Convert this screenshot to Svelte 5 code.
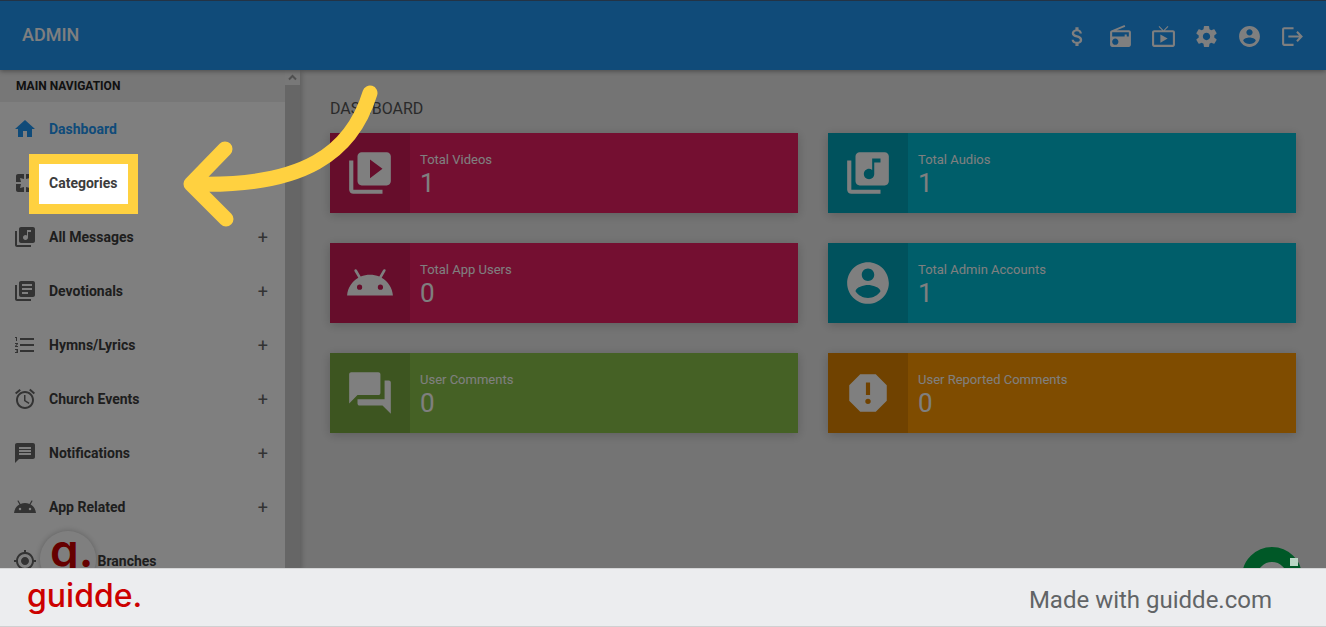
<script lang="ts">
  interface Action {
    label: string;
    icon: string;
  }

  interface MenuItem {
    label: string;
    icon: string;
    active?: boolean;
    expandable?: boolean;
  }

  interface Card {
    label: string;
    value: number;
    icon: string;
    tone: "pink" | "cyan" | "green" | "orange";
  }

  const icons: Record<string, string> = {
    home: "M10 20v-6h4v6h5v-8h3L12 3 2 12h3v8z",
    pages:
      "M3 5v6h5L7 7l4 1V3H5c-1.1 0-2 .9-2 2zm5 8H3v6c0 1.1.9 2 2 2h6v-5l-4 1 1-4zm9 4l-4-1v5h6c1.1 0 2-.9 2-2v-6h-5l1 4zm2-14h-6v5l4-1-1 4h5V5c0-1.1-.9-2-2-2z",
    music:
      "M20 2H8c-1.1 0-2 .9-2 2v12c0 1.1.9 2 2 2h12c1.1 0 2-.9 2-2V4c0-1.1-.9-2-2-2zm-2 5h-3v5.5c0 1.38-1.12 2.5-2.5 2.5S10 13.88 10 12.5s1.12-2.5 2.5-2.5c.57 0 1.08.19 1.5.51V5h4v2zM4 6H2v14c0 1.1.9 2 2 2h14v-2H4V6z",
    books:
      "M4 6H2v14c0 1.1.9 2 2 2h14v-2H4V6zm16-4H8c-1.1 0-2 .9-2 2v12c0 1.1.9 2 2 2h12c1.1 0 2-.9 2-2V4c0-1.1-.9-2-2-2zm-1 9H9V9h10v2zm-4 4H9v-2h6v2zm4-8H9V5h10v2z",
    list: "M2 17h2v.5H3v1h1v.5H2v1h3v-4H2v1zm1-9h1V4H2v1h1v3zm-1 3h1.8L2 13.1v.9h3v-1H3.2L5 10.9V10H2v1zm5-6v2h14V5H7zm0 14h14v-2H7v2zm0-6h14v-2H7v2z",
    alarm:
      "M22 5.7l-4.6-3.9-1.3 1.5 4.6 3.9L22 5.7zM7.9 3.4L6.6 1.9 2 5.7l1.3 1.5 4.6-3.8zM12.5 8H11v6l4.7 2.9.8-1.2-4-2.4V8zM12 4c-5 0-9 4-9 9s4 9 9 9 9-4 9-9-4-9-9-9zm0 16c-3.9 0-7-3.1-7-7s3.1-7 7-7 7 3.1 7 7-3.1 7-7 7z",
    message:
      "M20 2H4c-1.1 0-1.99.9-1.99 2L2 22l4-4h14c1.1 0 2-.9 2-2V4c0-1.1-.9-2-2-2zm-2 12H6v-2h12v2zm0-3H6V9h12v2zm0-3H6V6h12v2z",
    android:
      "M17.6 9.48l1.84-3.18c.16-.31.04-.69-.26-.85-.29-.15-.65-.06-.83.22l-1.88 3.24c-2.86-1.21-6.08-1.21-8.94 0L5.65 5.67c-.19-.29-.58-.38-.87-.2-.28.18-.37.54-.22.83L6.4 9.48C3.3 11.25 1.28 14.44 1 18h22c-.28-3.56-2.3-6.75-5.4-8.52zM7 15.25a1.25 1.25 0 1 1 0-2.5 1.25 1.25 0 0 1 0 2.5zm10 0a1.25 1.25 0 1 1 0-2.5 1.25 1.25 0 0 1 0 2.5z",
    location:
      "M12 8c-2.21 0-4 1.79-4 4s1.79 4 4 4 4-1.79 4-4-1.79-4-4-4zm8.94 3c-.46-4.17-3.77-7.48-7.94-7.94V1h-2v2.06C6.83 3.52 3.52 6.83 3.06 11H1v2h2.06c.46 4.17 3.77 7.48 7.94 7.94V23h2v-2.06c4.17-.46 7.48-3.77 7.94-7.94H23v-2h-2.06zM12 19c-3.87 0-7-3.13-7-7s3.13-7 7-7 7 3.13 7 7-3.13 7-7 7z",
    money:
      "M11.8 10.9c-2.27-.59-3-1.2-3-2.15 0-1.09 1.01-1.85 2.7-1.85 1.78 0 2.44.85 2.5 2.1h2.21c-.07-1.72-1.12-3.3-3.21-3.81V3h-3v2.16c-1.94.42-3.5 1.68-3.5 3.61 0 2.31 1.91 3.46 4.7 4.13 2.5.6 3 1.48 3 2.41 0 .69-.49 1.79-2.7 1.79-2.06 0-2.87-.92-2.98-2.1h-2.2c.12 2.19 1.76 3.42 3.68 3.83V21h3v-2.15c1.95-.37 3.5-1.5 3.5-3.55 0-2.84-2.43-3.81-4.7-4.4z",
    radio:
      "M3.24 6.15C2.51 6.43 2 7.17 2 8v12c0 1.1.89 2 2 2h16c1.11 0 2-.9 2-2V8c0-1.11-.89-2-2-2H8.3l8.26-3.34L15.88 1 3.24 6.15zM7 20c-1.66 0-3-1.34-3-3s1.34-3 3-3 3 1.34 3 3-1.34 3-3 3zm13-8h-2v-2h-2v2H4V8h16v4z",
    tv: "M21 6h-7.59l3.29-3.29L16 2l-4 4-4-4-.7.71L10.59 6H3c-1.1 0-2 .89-2 2v12c0 1.1.9 2 2 2h18c1.1 0 2-.9 2-2V8c0-1.11-.9-2-2-2zm0 14H3V8h18v12zM9 10v8l7-4z",
    settings:
      "M19.43 12.98c.04-.32.07-.64.07-.98s-.03-.66-.07-.98l2.11-1.65c.19-.15.24-.42.12-.64l-2-3.46c-.12-.22-.39-.3-.61-.22l-2.49 1c-.52-.4-1.08-.73-1.69-.98l-.38-2.65C14.46 2.18 14.25 2 14 2h-4c-.25 0-.46.18-.49.42l-.38 2.65c-.61.25-1.17.59-1.69.98l-2.49-1c-.23-.09-.49 0-.61.22l-2 3.46c-.13.22-.07.49.12.64l2.11 1.65c-.04.32-.07.65-.07.98s.03.66.07.98l-2.11 1.65c-.19.15-.24.42-.12.64l2 3.46c.12.22.39.3.61.22l2.49-1c.52.4 1.08.73 1.69.98l.38 2.65c.03.24.24.42.49.42h4c.25 0 .46-.18.49-.42l.38-2.65c.61-.25 1.17-.59 1.69-.98l2.49 1c.23.09.49 0 .61-.22l2-3.46c.12-.22.07-.49-.12-.64l-2.11-1.65zM12 15.5c-1.93 0-3.5-1.57-3.5-3.5s1.57-3.5 3.5-3.5 3.5 1.57 3.5 3.5-1.57 3.5-3.5 3.5z",
    account:
      "M12 2C6.48 2 2 6.48 2 12s4.48 10 10 10 10-4.48 10-10S17.52 2 12 2zm0 3c1.66 0 3 1.34 3 3s-1.34 3-3 3-3-1.34-3-3 1.34-3 3-3zm0 14.2c-2.5 0-4.71-1.28-6-3.22.03-1.99 4-3.08 6-3.08 1.99 0 5.97 1.09 6 3.08-1.29 1.94-3.5 3.22-6 3.22z",
    logout:
      "M4 3h9v2H4v14h9v2H4c-1.1 0-2-.9-2-2V5c0-1.1.9-2 2-2zm13 3.7L22 12l-5 5.3-1.4-1.4 2.7-2.9H8v-2h10.300L15.600 8.100z",
    video:
      "M4 6H2v14c0 1.1.9 2 2 2h14v-2H4V6zm16-4H8c-1.1 0-2 .9-2 2v12c0 1.1.9 2 2 2h12c1.1 0 2-.9 2-2V4c0-1.1-.9-2-2-2zm-8 12.5v-9l6 4.5-6 4.5z",
    forum:
      "M21 6h-2v9H6v2c0 .55.45 1 1 1h11l4 4V7c0-.55-.45-1-1-1zm-4 6V3c0-.55-.45-1-1-1H3c-.55 0-1 .45-1 1v14l4-4h10c.55 0 1-.45 1-1z",
    report:
      "M15.73 3H8.27L3 8.27v7.46L8.27 21h7.46L21 15.73V8.27L15.73 3zM12 17.3a1.3 1.3 0 1 1 0-2.6 1.3 1.3 0 0 1 0 2.6zm1-4.3h-2V7h2v6z",
  };

  const actions: Action[] = [
    { label: "Donations", icon: "money" },
    { label: "Radio", icon: "radio" },
    { label: "Live TV", icon: "tv" },
    { label: "Settings", icon: "settings" },
    { label: "Account", icon: "account" },
    { label: "Log out", icon: "logout" },
  ];

  const menu: MenuItem[] = [
    { label: "Dashboard", icon: "home", active: true },
    { label: "Categories", icon: "pages" },
    { label: "All Messages", icon: "music", expandable: true },
    { label: "Devotionals", icon: "books", expandable: true },
    { label: "Hymns/Lyrics", icon: "list", expandable: true },
    { label: "Church Events", icon: "alarm", expandable: true },
    { label: "Notifications", icon: "message", expandable: true },
    { label: "App Related", icon: "android", expandable: true },
    { label: "Church Branches", icon: "location" },
  ];

  const cards: Card[] = [
    { label: "Total Videos", value: 1, icon: "video", tone: "pink" },
    { label: "Total Audios", value: 1, icon: "music", tone: "cyan" },
    { label: "Total App Users", value: 0, icon: "android", tone: "pink" },
    { label: "Total Admin Accounts", value: 1, icon: "account", tone: "cyan" },
    { label: "User Comments", value: 0, icon: "forum", tone: "green" },
    { label: "User Reported Comments", value: 0, icon: "report", tone: "orange" },
  ];
</script>

{#snippet icon(name: string)}
  <svg class="icon" viewBox="0 0 24 24" aria-hidden="true">
    <path d={icons[name]} fill-rule="evenodd" />
  </svg>
{/snippet}

<div class="page">
  <div class="screen">
    <header class="topbar">
      <a class="brand" href="#home">ADMIN</a>
      <nav class="actions" aria-label="Account actions">
        {#each actions as action}
          <a href="#{action.icon}" aria-label={action.label}>{@render icon(action.icon)}</a>
        {/each}
      </nav>
    </header>

    <div class="body">
      <aside class="sidebar">
        <div class="sidebar-main">
          <div class="nav-title">MAIN NAVIGATION</div>
          <nav aria-label="Main navigation">
            {#each menu as item}
              <a class="nav-item" class:active={item.active} href="#{item.icon}">
                {@render icon(item.icon)}
                <span class="nav-label">{item.label}</span>
                {#if item.expandable}
                  <span class="plus">+</span>
                {/if}
              </a>
            {/each}
          </nav>
        </div>
        <div class="scrollbar" aria-hidden="true">
          <div class="scroll-up">
            <svg viewBox="0 0 15 15"><path d="M4 9.500l3.500-3.500 3.500 3.500" /></svg>
          </div>
        </div>
      </aside>

      <main>
        <h1>DASHBOARD</h1>
        <div class="cards">
          {#each cards as card}
            <section class="card {card.tone}">
              <div class="card-icon">{@render icon(card.icon)}</div>
              <div class="card-text">
                <div class="card-label">{card.label}</div>
                <div class="card-value">{card.value}</div>
              </div>
            </section>
          {/each}
        </div>
      </main>
    </div>

    <div class="guide-bubble">g.</div>
    <div class="chat-bubble"></div>
    <div class="spotlight"></div>
    <div class="chat-badge"></div>
    <svg class="arrow" viewBox="0 0 200 150" aria-hidden="true">
      <path d="M190 13C172 72 125 108 11 104M45 69L11 104l35 35" />
    </svg>
  </div>

  <footer>
    <span class="logo">guidde.</span>
    <span class="credit">Made with guidde.com</span>
  </footer>
</div>

<style>
  :global(body) {
    margin: 0;
    font-family: Roboto, "Liberation Sans", sans-serif;
  }

  .page {
    display: flex;
    flex-direction: column;
    height: 100vh;
  }

  .screen {
    position: relative;
    display: flex;
    flex: 1;
    flex-direction: column;
    min-height: 0;
    overflow: hidden;
    background: #e9e9e9;
  }

  a {
    color: inherit;
    text-decoration: none;
  }

  .icon {
    display: block;
    flex-shrink: 0;
    width: 24px;
    height: 24px;
    fill: currentColor;
  }

  .topbar {
    position: relative;
    z-index: 2;
    display: flex;
    flex-shrink: 0;
    align-items: center;
    justify-content: space-between;
    box-sizing: border-box;
    height: 70px;
    padding: 0 21px 0 22px;
    border-top: 1px solid #46668a;
    background: #2196f3;
    box-shadow: 0 1px 5px rgba(0, 0, 0, 0.4);
    color: #fff;
  }

  .brand {
    padding-bottom: 2px;
    font-size: 18px;
    font-weight: 500;
  }

  .actions {
    display: flex;
    gap: 18px;
    padding-top: 1px;
  }

  .actions .icon {
    width: 25px;
    height: 25px;
  }

  .body {
    display: flex;
    flex: 1;
    min-height: 0;
  }

  .sidebar {
    display: flex;
    flex-shrink: 0;
    width: 300px;
    overflow: hidden;
    background: #fff;
    box-shadow: 2px 2px 5px rgba(0, 0, 0, 0.2);
  }

  .sidebar-main {
    flex: 1;
  }

  .nav-title {
    padding: 8px 16px;
    background: #eee;
    color: #222;
    font-size: 12px;
    font-weight: 700;
    line-height: 16px;
  }

  .nav-item {
    display: flex;
    align-items: center;
    gap: 12px;
    height: 54px;
    padding: 0 17px 0 13px;
    color: #666;
  }

  .nav-label {
    flex: 1;
    color: #3c3c3c;
    font-size: 14px;
    font-weight: 700;
  }

  .active,
  .active .nav-label {
    color: #2196f3;
  }

  .plus {
    font-size: 18px;
    font-weight: 400;
  }

  .scrollbar {
    width: 15px;
    background: #cdcdcd;
  }

  .scroll-up {
    height: 15px;
    background: #f1f1f1;
  }

  .scroll-up svg {
    display: block;
    fill: none;
    stroke: #a0a0a0;
    stroke-width: 2;
  }

  main {
    flex: 1;
    padding: 29px 30px;
  }

  h1 {
    margin: 0 0 14px;
    color: #555;
    font-size: 16px;
    font-weight: 400;
    line-height: 20px;
  }

  .cards {
    display: grid;
    grid-template-columns: 1fr 1fr;
    gap: 30px;
  }

  .card {
    display: flex;
    height: 80px;
    box-shadow: 0 2px 10px rgba(0, 0, 0, 0.2);
    color: #fff;
  }

  .pink {
    background: #e91e63;
  }

  .cyan {
    background: #00bcd4;
  }

  .green {
    background: #8bc34a;
  }

  .orange {
    background: #ff9800;
  }

  .card-icon {
    display: flex;
    align-items: center;
    justify-content: center;
    width: 80px;
    background: rgba(0, 0, 0, 0.12);
  }

  .card-icon .icon {
    width: 50px;
    height: 50px;
  }

  .card-text {
    padding: 18px 10px;
  }

  .card-label {
    font-size: 13px;
    line-height: 18px;
  }

  .card-value {
    font-size: 26px;
    line-height: 28px;
  }

  .guide-bubble {
    position: absolute;
    bottom: -19px;
    left: 40px;
    box-sizing: border-box;
    width: 56px;
    height: 56px;
    padding-left: 10px;
    border-radius: 50%;
    background: #fff;
    box-shadow: 0 0 6px rgba(0, 0, 0, 0.25);
    color: #c00;
    font-family: Inter, sans-serif;
    font-size: 46px;
    font-weight: 600;
    line-height: 38px;
  }

  .chat-bubble {
    position: absolute;
    right: 24px;
    bottom: -39px;
    box-sizing: border-box;
    width: 60px;
    height: 60px;
    border: 15px solid #00b14f;
    border-radius: 50%;
    background: #fff;
  }

  .chat-badge {
    position: absolute;
    right: 28px;
    bottom: 2px;
    width: 8px;
    height: 8px;
    background: #b9d6c5;
  }

  /* the outer shadow dims everything around the highlighted menu item */
  .spotlight {
    position: absolute;
    z-index: 3;
    top: 164px;
    left: 39px;
    width: 89px;
    height: 40px;
    box-shadow:
      0 0 0 10px #ffd140,
      0 0 0 4000px rgba(0, 0, 0, 0.5);
  }

  .chat-badge,
  .arrow {
    z-index: 4;
  }

  .arrow {
    position: absolute;
    top: 80px;
    left: 180px;
    width: 200px;
    height: 150px;
    fill: none;
    stroke: #ffd140;
    stroke-width: 15;
    stroke-linecap: round;
    stroke-linejoin: round;
  }

  footer {
    display: flex;
    flex-shrink: 0;
    align-items: center;
    justify-content: space-between;
    box-sizing: border-box;
    height: 59px;
    padding: 0 54px 0 27px;
    border-top: 1px solid #d5d6d7;
    border-bottom: 1px solid #d0d0d1;
    background: #ecedef;
  }

  .logo {
    padding-bottom: 4px;
    color: #c00;
    font-family: Inter, sans-serif;
    font-size: 32px;
    font-weight: 500;
  }

  .credit {
    padding-top: 4px;
    color: #616466;
    font-size: 24px;
  }
</style>
